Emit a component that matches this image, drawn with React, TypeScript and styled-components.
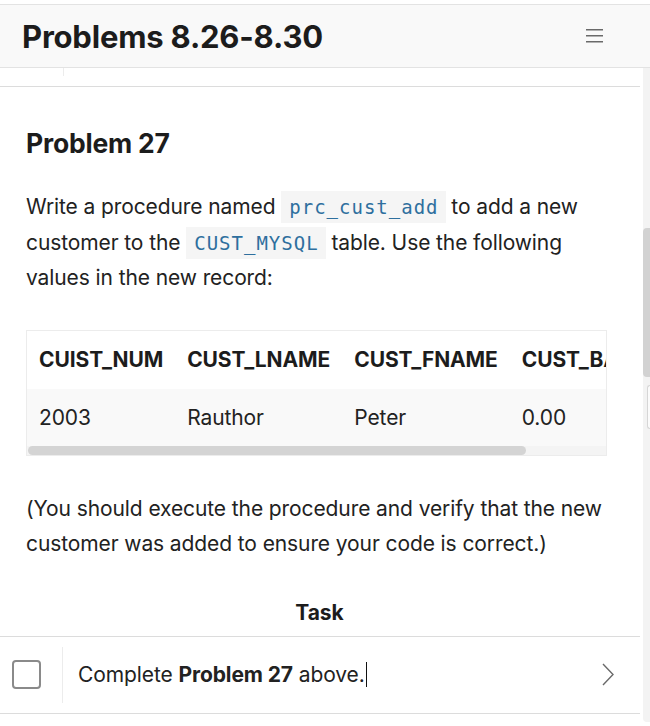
import { createGlobalStyle, styled } from "styled-components";

const GlobalStyle = createGlobalStyle`
  html, body {
    margin: 0;
    padding: 0;
    background: #ffffff;
  }
  body {
    font-family: Inter, "Noto Sans", sans-serif;
    color: #1f1f1f;
  }
`;

const Page = styled.div`
  width: 650px;
  height: 726px;
  overflow: hidden;
  display: flex;
  flex-direction: column;
  padding-top: 4px;
  box-sizing: border-box;
`;

const Header = styled.header`
  flex: none;
  height: 62px;
  display: flex;
  align-items: center;
  justify-content: space-between;
  padding: 0 47px 0 22px;
  background: #f9f9f9;
  border-top: 1px solid #e3e3e3;
  border-bottom: 1px solid #e3e3e3;
`;

const HeaderTitle = styled.h1`
  margin: 0;
  font-size: 31px;
  font-weight: 700;
  color: #1c1c1c;
  letter-spacing: -0.2px;
`;

const MenuButton = styled.button`
  border: none;
  background: transparent;
  padding: 0;
  display: flex;
`;

const Body = styled.div`
  flex: 1;
  display: flex;
  min-height: 0;
`;

const Main = styled.main`
  flex: 1;
  display: flex;
  flex-direction: column;
  min-width: 0;
`;

const Rail = styled.div`
  flex: none;
  width: 7px;
  margin-left: 3px;
  background: #f3f3f3;
  border-bottom-left-radius: 4px;
  margin-bottom: 4px;
  display: flex;
  flex-direction: column;
  padding-top: 160px;
`;

const RailThumb = styled.div`
  height: 149px;
  border-radius: 4px 0 0 4px;
  background: #d2d2d2;
`;

const RailTab = styled.div`
  margin-top: 8px;
  margin-left: 4px;
  height: 42px;
  border: 1px solid #d6d6d6;
  border-right: none;
  border-radius: 3px 0 0 3px;
  background: #fbfbfb;
`;

const PrevRow = styled.div`
  flex: none;
  height: 18px;
  border-bottom: 1px solid #dcdcdc;
  display: flex;
`;

const PrevCell = styled.div`
  width: 63px;
  height: 8px;
  border-right: 1px solid #ececec;
`;

const Content = styled.section`
  padding: 0 33px 0 26px;
`;

const SectionTitle = styled.h2`
  margin: 40px 0 0;
  font-size: 26.5px;
  font-weight: 700;
  line-height: 32px;
  color: #1c1c1c;
  letter-spacing: -0.2px;
`;

const Paragraph = styled.p<{ $top: number }>`
  margin: ${(p) => p.$top}px 0 0;
  font-size: 21px;
  line-height: 35.5px;
  color: #222;
  letter-spacing: -0.1px;
`;

const Code = styled.code`
  font-family: "DejaVu Sans Mono", monospace;
  font-size: 19px;
  line-height: 1;
  letter-spacing: 1px;
  color: #2e6f9e;
  background: #f5f5f5;
  padding: 5px 7px 5px 8px;
`;

const TableBox = styled.div`
  margin-top: 34px;
  border: 1px solid #ececec;
  overflow: hidden;
`;

const Table = styled.table`
  border-collapse: collapse;
  white-space: nowrap;
  font-size: 21px;
  letter-spacing: -0.1px;
`;

const HeadCell = styled.th`
  text-align: left;
  font-weight: 700;
  padding: 0 12px;
  height: 58px;
  color: #1c1c1c;
`;

const DataCell = styled.td`
  padding: 0 12px;
  height: 57px;
  background: #f9f9f9;
  color: #222;
`;

const HScroll = styled.div`
  height: 9px;
  background: #f4f4f4;
  padding: 0 80px 0 1px;
`;

const HThumb = styled.div`
  height: 9px;
  border-radius: 5px;
  background: #d4d4d4;
`;

const TaskLabel = styled.div`
  margin-top: 38px;
  text-align: center;
  font-size: 21px;
  font-weight: 700;
  color: #1c1c1c;
  padding-left: 6px;
`;

const TaskRow = styled.div`
  margin-top: 11px;
  height: 76px;
  display: flex;
  align-items: center;
  border-top: 1px solid #dcdcdc;
  border-bottom: 1px solid #dcdcdc;
`;

const CheckCell = styled.div`
  width: 63px;
  height: 56px;
  display: flex;
  align-items: center;
  padding-left: 12px;
  box-sizing: border-box;
  border-right: 1px solid #ececec;
`;

const Checkbox = styled.span`
  width: 25px;
  height: 25px;
  border: 2px solid #8a8a8a;
  border-radius: 4px;
`;

const TaskText = styled.div`
  flex: 1;
  padding-left: 15px;
  font-size: 21px;
  letter-spacing: -0.1px;
  color: #222;
  display: flex;
  align-items: center;
`;

const Caret = styled.span`
  display: inline-block;
  width: 1px;
  height: 25px;
  background: #111;
  margin-left: 1px;
`;

const Chevron = styled.div`
  padding-right: 26px;
  display: flex;
`;

const columns = ["CUIST_NUM", "CUST_LNAME", "CUST_FNAME", "CUST_BALANCE"];
const rowValues = ["2003", "Rauthor", "Peter", "0.00"];

export default function App() {
  return (
    <>
      <GlobalStyle />
      <Page>
        <Header>
          <HeaderTitle>Problems 8.26-8.30</HeaderTitle>
          <MenuButton aria-label="menu">
            <svg width="17" height="14" viewBox="0 0 17 14">
              <rect x="0" y="0" width="17" height="1.5" fill="#6a6a6a" />
              <rect x="0" y="6" width="17" height="1.5" fill="#6a6a6a" />
              <rect x="0" y="12" width="17" height="1.5" fill="#6a6a6a" />
            </svg>
          </MenuButton>
        </Header>
        <Body>
          <Main>
            <PrevRow>
              <PrevCell />
            </PrevRow>
            <Content>
              <SectionTitle>Problem 27</SectionTitle>
              <Paragraph $top={30}>
                Write a procedure named <Code>prc_cust_add</Code> to add a new
                customer to the <Code>CUST_MYSQL</Code> table. Use the following
                values in the new record:
              </Paragraph>
              <TableBox>
                <Table>
                  <thead>
                    <tr>
                      {columns.map((c) => (
                        <HeadCell key={c}>{c}</HeadCell>
                      ))}
                    </tr>
                  </thead>
                  <tbody>
                    <tr>
                      {rowValues.map((v) => (
                        <DataCell key={v}>{v}</DataCell>
                      ))}
                    </tr>
                  </tbody>
                </Table>
                <HScroll>
                  <HThumb />
                </HScroll>
              </TableBox>
              <Paragraph $top={35}>
                (You should execute the procedure and verify that the new
                customer was added to ensure your code is correct.)
              </Paragraph>
              <TaskLabel>Task</TaskLabel>
            </Content>
            <TaskRow>
              <CheckCell>
                <Checkbox />
              </CheckCell>
              <TaskText>
                Complete&nbsp;<b>Problem 27</b>&nbsp;above.
                <Caret />
              </TaskText>
              <Chevron>
                <svg width="12" height="23" viewBox="0 0 12 23">
                  <path
                    d="M1 1 L11 11.5 L1 22"
                    fill="none"
                    stroke="#6a6a6a"
                    strokeWidth="1.4"
                  />
                </svg>
              </Chevron>
            </TaskRow>
          </Main>
          <Rail>
            <RailThumb />
            <RailTab />
          </Rail>
        </Body>
      </Page>
    </>
  );
}
